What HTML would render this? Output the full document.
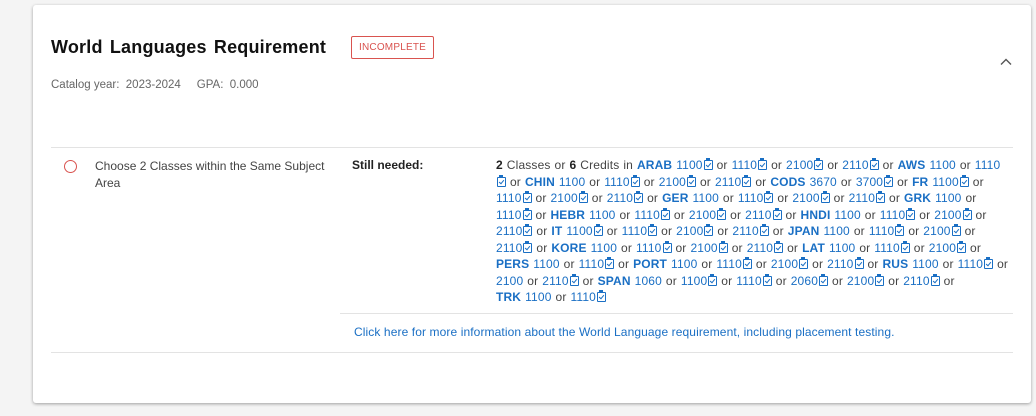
<!DOCTYPE html>
<html><head><meta charset="utf-8"><style>
*{margin:0;padding:0;box-sizing:border-box}
body{width:1036px;height:416px;background:#f4f4f4;font-family:"Liberation Sans",sans-serif;font-size:12px;color:#333;position:relative;overflow:hidden}
.card{position:absolute;left:33px;top:5px;width:998px;height:398px;background:#fff;border-radius:3px;box-shadow:0 1px 3px rgba(0,0,0,.35)}
.abs{position:absolute;white-space:nowrap}
h1{font-size:18px;font-weight:bold;color:#111;letter-spacing:.2px;word-spacing:2px}
.badge{border:1px solid #d9534f;color:#d9534f;font-size:10px;letter-spacing:.2px;padding:5px 7px;border-radius:2px}
.meta{color:#666;font-size:11.5px}
.hr{position:absolute;height:1px;background:#e3e3e3}
.ln{position:absolute;left:463px;white-space:nowrap;line-height:16px;color:#444;letter-spacing:.15px;word-spacing:.5px}
.ln b{color:#222}
.ln a,.ln .k{color:#1a6fc4;text-decoration:none}
.k{font-weight:bold}
.c{display:inline-block;width:9px;height:10px;border:1.3px solid #1a6fc4;border-radius:1px;position:relative;vertical-align:-1px;margin-left:1px}
.c:before{content:"";position:absolute;left:1px;top:-3px;width:4px;height:2px;background:#1a6fc4}
.c:after{content:"";position:absolute;left:2px;top:1px;width:2px;height:4px;border-right:1.3px solid #1a6fc4;border-bottom:1.3px solid #1a6fc4;transform:rotate(40deg)}
</style></head><body>
<div class="card">
<div class="abs" style="left:18px;top:32px"><h1>World Languages Requirement</h1></div>
<div class="abs badge" style="left:318px;top:31px">INCOMPLETE</div>
<div class="abs meta" style="left:18px;top:74px">Catalog year:&nbsp; 2023-2024 &nbsp; &nbsp; GPA:&nbsp; 0.000</div>
<svg class="abs" style="left:967px;top:53px" width="12" height="8"><path d="M1 6.5L6 1.5L11 6.5" fill="none" stroke="#555" stroke-width="1.4"/></svg>
<div class="hr" style="left:18px;top:142px;width:962px"></div>
<div class="abs" style="left:31px;top:155px;width:13px;height:13px;border:1.5px solid #d9534f;border-radius:50%"></div>
<div class="abs" style="left:62px;top:153px;line-height:16.5px;color:#444">Choose 2 Classes within the Same Subject<br>Area</div>
<div class="abs" style="left:319px;top:153px;font-weight:bold;color:#222">Still needed:</div>
<div class="ln" style="top:152px"><b>2</b> Classes or <b>6</b> Credits in <span class="k">ARAB</span> <a>1100</a><i class="c"></i> or <a>1110</a><i class="c"></i> or <a>2100</a><i class="c"></i> or <a>2110</a><i class="c"></i> or <span class="k">AWS</span> <a>1100</a> or <a>1110</a></div>
<div class="ln" style="top:168.5px"><i class="c"></i> or <span class="k">CHIN</span> <a>1100</a> or <a>1110</a><i class="c"></i> or <a>2100</a><i class="c"></i> or <a>2110</a><i class="c"></i> or <span class="k">CODS</span> <a>3670</a> or <a>3700</a><i class="c"></i> or <span class="k">FR</span> <a>1100</a><i class="c"></i> or</div>
<div class="ln" style="top:185px"><a>1110</a><i class="c"></i> or <a>2100</a><i class="c"></i> or <a>2110</a><i class="c"></i> or <span class="k">GER</span> <a>1100</a> or <a>1110</a><i class="c"></i> or <a>2100</a><i class="c"></i> or <a>2110</a><i class="c"></i> or <span class="k">GRK</span> <a>1100</a> or</div>
<div class="ln" style="top:201.5px"><a>1110</a><i class="c"></i> or <span class="k">HEBR</span> <a>1100</a> or <a>1110</a><i class="c"></i> or <a>2100</a><i class="c"></i> or <a>2110</a><i class="c"></i> or <span class="k">HNDI</span> <a>1100</a> or <a>1110</a><i class="c"></i> or <a>2100</a><i class="c"></i> or</div>
<div class="ln" style="top:218px"><a>2110</a><i class="c"></i> or <span class="k">IT</span> <a>1100</a><i class="c"></i> or <a>1110</a><i class="c"></i> or <a>2100</a><i class="c"></i> or <a>2110</a><i class="c"></i> or <span class="k">JPAN</span> <a>1100</a> or <a>1110</a><i class="c"></i> or <a>2100</a><i class="c"></i> or</div>
<div class="ln" style="top:234.5px"><a>2110</a><i class="c"></i> or <span class="k">KORE</span> <a>1100</a> or <a>1110</a><i class="c"></i> or <a>2100</a><i class="c"></i> or <a>2110</a><i class="c"></i> or <span class="k">LAT</span> <a>1100</a> or <a>1110</a><i class="c"></i> or <a>2100</a><i class="c"></i> or</div>
<div class="ln" style="top:251px"><span class="k">PERS</span> <a>1100</a> or <a>1110</a><i class="c"></i> or <span class="k">PORT</span> <a>1100</a> or <a>1110</a><i class="c"></i> or <a>2100</a><i class="c"></i> or <a>2110</a><i class="c"></i> or <span class="k">RUS</span> <a>1100</a> or <a>1110</a><i class="c"></i> or</div>
<div class="ln" style="top:267.5px"><a>2100</a> or <a>2110</a><i class="c"></i> or <span class="k">SPAN</span> <a>1060</a> or <a>1100</a><i class="c"></i> or <a>1110</a><i class="c"></i> or <a>2060</a><i class="c"></i> or <a>2100</a><i class="c"></i> or <a>2110</a><i class="c"></i> or</div>
<div class="ln" style="top:284px"><span class="k">TRK</span> <a>1100</a> or <a>1110</a><i class="c"></i></div>
<div class="hr" style="left:307px;top:308px;width:673px"></div>
<div class="abs" style="left:321px;top:320px;color:#1a6fc4;letter-spacing:.1px">Click here for more information about the World Language requirement, including placement testing.</div>
<div class="hr" style="left:18px;top:347px;width:962px"></div>
</div>
</body></html>
